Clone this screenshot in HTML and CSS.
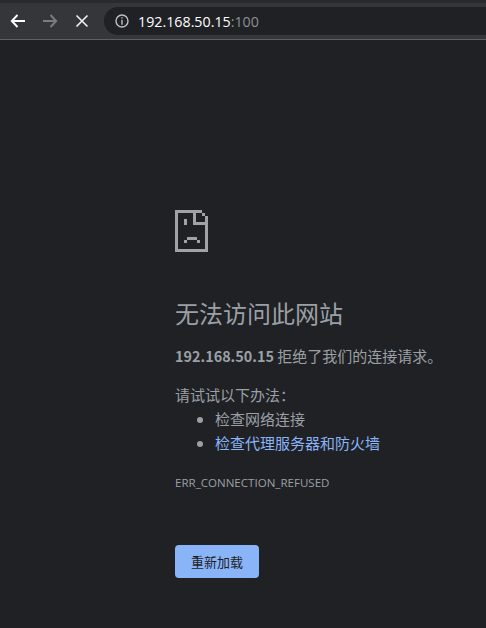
FILE: index.html
```html
<!DOCTYPE html>
<html lang="zh-CN">
<head>
  <meta charset="utf-8">
  <title>192.168.50.15</title>
  <link rel="stylesheet" href="styles.css">
</head>
<body>
  <div class="topstrip"></div>
  <div class="toolbar">
    <svg class="navicon" width="16" height="16" viewBox="0 0 16 16"><path d="M15 8H2M7.5 2L1.8 8L7.5 14" fill="none" stroke="#fff" stroke-width="1.9"/></svg>
    <svg class="navicon" width="16" height="16" viewBox="0 0 16 16"><path d="M1 8H14M8.5 2L14.2 8L8.5 14" fill="none" stroke="#7b7c7f" stroke-width="1.9"/></svg>
    <svg class="navicon" width="16" height="16" viewBox="0 0 16 16"><path d="M2.5 2.5L13.5 13.5M13.5 2.5L2.5 13.5" fill="none" stroke="#f1f1f1" stroke-width="1.6"/></svg>
    <div class="omnibox">
      <svg width="14" height="14" viewBox="0 0 14 14"><circle cx="7" cy="7" r="6" fill="none" stroke="#bdc1c6" stroke-width="1.4"/><path d="M6.3 3.2h1.4v1.4H6.3zM6.3 5.8h1.4v5H6.3z" fill="#bdc1c6"/></svg>
      <span class="url">192.168.50.15<span class="port">:100</span></span>
    </div>
  </div>

  <div class="main">
    <svg class="sadfile" width="33" height="42" viewBox="0 0 33 42"><path fill="#a0a2a4" fill-rule="evenodd" d="M0 0H27V3H30V6H33V42H0ZM3 3V39H30V15H18V3ZM21 3V12H30V6H27V3Z"/><path fill="#a0a2a4" d="M9 9H12V15H9ZM12 27H22V30H25V33H22V30H12V33H9V30H12Z"/></svg>
    <h1>无法访问此网站</h1>
    <p class="summary"><strong>192.168.50.15</strong> 拒绝了我们的连接请求。</p>
    <p class="try">请试试以下办法：</p>
    <ul>
      <li>检查网络连接</li>
      <li><a href="#">检查代理服务器和防火墙</a></li>
    </ul>
    <div class="code">ERR_CONNECTION_REFUSED</div>
    <button>重新加载</button>
  </div>
</body>
</html>
```

FILE: styles.css
```css
html, body {
  margin: 0;
  height: 100%;
  background: #202124;
  overflow: hidden;
}

body {
  font-family: "Noto Sans CJK SC", "Noto Sans", sans-serif;
  color: #9aa0a6;
}

/* browser chrome */

.topstrip {
  height: 3px;
  background: #292a2d;
}

.toolbar {
  display: flex;
  align-items: center;
  height: 36px;
  padding-left: 10px;
  background: #35363a;
  border-bottom: 1px solid #5f6063;
}

.navicon {
  flex: none;
  margin-right: 16px;
}

.omnibox {
  display: flex;
  align-items: center;
  flex: 1;
  gap: 9px;
  height: 28px;
  margin-left: -2px;
  padding-left: 11px;
  border-radius: 14px 0 0 14px;
  background: #202124;
}

.url {
  font-family: "Open Sans", sans-serif;
  font-size: 14.25px;
  color: #fff;
}

.port {
  color: #8d9094;
}

/* error page */

.main {
  padding: 170px 0 0 175px;
}

.sadfile {
  display: block;
}

h1 {
  margin: 44px 0 0;
  font-size: 24px;
  font-weight: 400;
  line-height: 34px;
  color: #9aa0a6;
}

p {
  margin: 0;
  font-size: 15px;
  line-height: 24px;
}

strong {
  font-size: 14.4px;
}

.summary {
  margin-top: 14px;
}

.try {
  margin-top: 15px;
}

ul {
  margin: 0;
  padding-left: 40px;
  font-size: 15px;
  line-height: 24px;
}

li::marker {
  color: #9aa0a6;
}

a {
  color: #8ab4f8;
  text-decoration: none;
}

.code {
  margin-top: 20px;
  font-family: "Open Sans", sans-serif;
  font-size: 11.55px;
  line-height: 16px;
}

button {
  display: block;
  width: 84px;
  height: 33px;
  margin-top: 54px;
  padding: 0;
  border: 0;
  border-radius: 4px;
  background: #8ab4f8;
  color: #202124;
  font-family: inherit;
  font-size: 13px;
}
```
